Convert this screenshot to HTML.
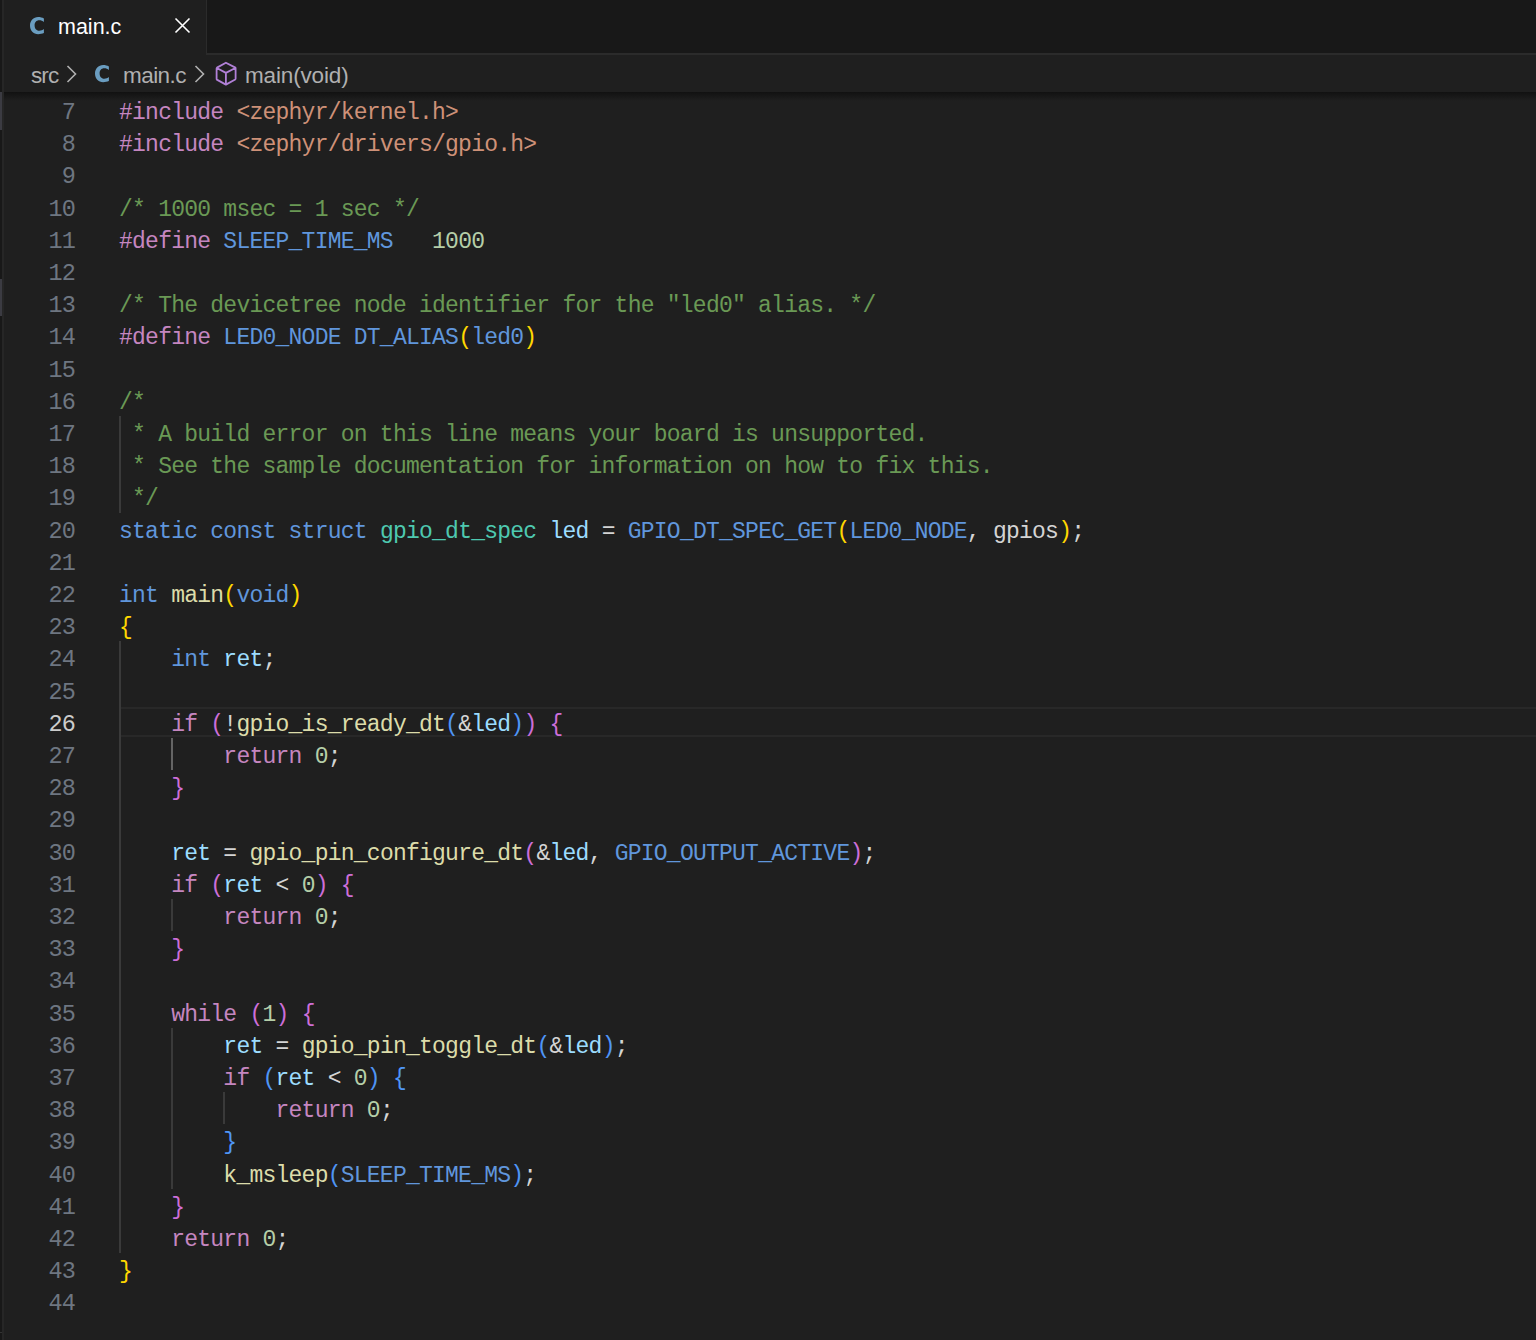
<!DOCTYPE html>
<html><head><meta charset="utf-8"><style>
html,body{margin:0;padding:0;}
body{width:1536px;height:1340px;overflow:hidden;background:#1f1f1f;position:relative;font-family:"Liberation Sans",sans-serif;}
.abs{position:absolute;}
#tabbar{position:absolute;left:0;top:0;width:1536px;height:55px;background:#181818;}
#tabbar .bb{position:absolute;left:207px;right:0;top:53px;height:2px;background:#2b2b2b;}
#tab{position:absolute;left:4px;top:0;width:202px;height:55px;background:#1f1f1f;}
#tabr{position:absolute;left:206px;top:0;width:1px;height:55px;background:#2b2b2b;}
#lstrip{position:absolute;left:0;top:0;width:2px;height:1340px;background:#181818;}
#lborder{position:absolute;left:2px;top:0;width:2px;height:1340px;background:#262626;}
.mk{position:absolute;left:0;width:2px;background:#3b3b42;}
.ui{position:absolute;white-space:pre;font-family:"Liberation Sans",sans-serif;}
#shadow{position:absolute;left:4px;right:0;top:92px;height:9px;background:linear-gradient(#111111 0%,#141414 20%,rgba(31,31,31,0) 100%);}
.ln{position:absolute;left:0;width:75.00px;text-align:right;height:32px;line-height:32px;font-family:"Liberation Mono",monospace;font-size:23.5px;letter-spacing:-0.9px;color:#6e7681;white-space:pre;transform:translateY(0px);}
.ln.cur{color:#cccccc;}
.cl{position:absolute;left:119.00px;height:32px;line-height:32px;font-family:"Liberation Mono",monospace;font-size:23.0px;letter-spacing:-0.76px;color:#d4d4d4;white-space:pre;transform:translateY(0px);}
.ig{position:absolute;width:2px;background:#3a3a3a;}
.ig.act{background:#646464;}
#curline{position:absolute;left:119.00px;right:0;top:707.00px;height:30px;box-sizing:border-box;border-top:2px solid #282828;border-bottom:2px solid #282828;}
.k{color:#c586c0}.s{color:#ce9178}.c{color:#6a9955}.b{color:#6096dc}.n{color:#b5cea8}.t{color:#4ec9b0}.v{color:#9cdcfe}.f{color:#dcdcaa}.y{color:#ffd700}.p{color:#cc6ed8}.q{color:#4f95f5}
</style></head><body>
<div id="tabbar"><div class="bb"></div></div>
<div id="tab"></div>
<div id="tabr"></div>
<div id="lstrip"></div>
<div id="lborder"></div>
<div class="mk" style="top:92px;height:38px"></div>
<div class="mk" style="top:279px;height:37px"></div>
<div class="mk" style="top:1332px;height:1px;background:#333"></div>
<!-- tab content -->
<svg class="abs" style="left:30.3px;top:16.8px" width="15" height="18" viewBox="0 0 15 18"><path d="M13.9 1.5 C12.3 0.5 10.3 0 8.2 0 C3.3 0 0 3.6 0 8.57 C0 13.5 3.3 17.14 8.2 17.14 C10.3 17.14 12.3 16.7 13.9 16.1 L13.9 12.1 C12.6 13.2 11.2 13.8 9.2 13.8 C6.3 13.8 4.6 11.6 4.6 8.57 C4.6 5.5 6.3 3.35 9.2 3.35 C11.2 3.35 12.6 4.0 13.9 5.0 Z" fill="#6a9dc0"/></svg>
<div class="ui" style="left:58px;top:13px;font-size:21.5px;color:#ffffff;line-height:28px">main.c</div>
<svg class="abs" style="left:173.8px;top:17.2px" width="17" height="17" viewBox="0 0 17 17"><path d="M1.5 1.5 L15.5 15.5 M15.5 1.5 L1.5 15.5" stroke="#ffffff" stroke-width="1.6" fill="none"/></svg>
<!-- breadcrumbs -->
<div class="ui" style="left:31px;top:62px;font-size:22.5px;letter-spacing:-0.9px;color:#b0b0b0;line-height:28px">src</div>
<svg class="abs" style="left:66px;top:65px" width="12" height="18" viewBox="0 0 12 18"><path d="M1.5 1 L9.5 9 L1.5 17" stroke="#b0b0b0" stroke-width="1.6" fill="none"/></svg>
<svg class="abs" style="left:94.6px;top:64.8px" width="15" height="18" viewBox="0 0 15 18"><path d="M13.9 1.5 C12.3 0.5 10.3 0 8.2 0 C3.3 0 0 3.6 0 8.57 C0 13.5 3.3 17.14 8.2 17.14 C10.3 17.14 12.3 16.7 13.9 16.1 L13.9 12.1 C12.6 13.2 11.2 13.8 9.2 13.8 C6.3 13.8 4.6 11.6 4.6 8.57 C4.6 5.5 6.3 3.35 9.2 3.35 C11.2 3.35 12.6 4.0 13.9 5.0 Z" fill="#6a9dc0"/></svg>
<div class="ui" style="left:123px;top:62px;font-size:22.5px;letter-spacing:-0.55px;color:#b0b0b0;line-height:28px">main.c</div>
<svg class="abs" style="left:194px;top:65px" width="12" height="18" viewBox="0 0 12 18"><path d="M1.5 1 L9.5 9 L1.5 17" stroke="#b0b0b0" stroke-width="1.6" fill="none"/></svg>
<svg class="abs" style="left:214px;top:61px" width="24" height="26" viewBox="0 0 24 26"><path d="M11.9 1.7 L21.4 6.6 Q21.6 6.8 21.6 7.4 L21.6 17.6 Q21.6 18.2 21.2 18.5 L11.9 23.6 L2.8 18.6 Q2.6 18.3 2.6 17.8 L2.6 7.4 Q2.6 6.9 3 6.6 Z M2.8 7 L11.9 11.9 L21.4 7 M11.9 11.9 L11.9 23.6" stroke="#b180d7" stroke-width="1.8" fill="none" stroke-linejoin="round"/></svg>
<div class="ui" style="left:245px;top:62px;font-size:22.5px;letter-spacing:-0.15px;color:#b0b0b0;line-height:28px">main(void)</div>
<div id="shadow"></div>
<div id="curline"></div>
<div class="ig" style="left:119.00px;top:416.00px;height:96.60px"></div><div class="ig" style="left:119.00px;top:641.40px;height:611.80px"></div><div class="ig act" style="left:171.16px;top:738.00px;height:32.20px"></div><div class="ig" style="left:171.16px;top:899.00px;height:32.20px"></div><div class="ig" style="left:171.16px;top:1027.80px;height:161.00px"></div><div class="ig" style="left:223.32px;top:1092.20px;height:32.20px"></div>
<div class="ln" style="top:97.00px">7</div><div class="cl" style="top:97.00px"><span class="k">#include</span> <span class="s">&lt;zephyr/kernel.h&gt;</span></div><div class="ln" style="top:129.00px">8</div><div class="cl" style="top:129.00px"><span class="k">#include</span> <span class="s">&lt;zephyr/drivers/gpio.h&gt;</span></div><div class="ln" style="top:161.00px">9</div><div class="cl" style="top:161.00px"></div><div class="ln" style="top:194.00px">10</div><div class="cl" style="top:194.00px"><span class="c">/* 1000 msec = 1 sec */</span></div><div class="ln" style="top:226.00px">11</div><div class="cl" style="top:226.00px"><span class="k">#define</span> <span class="b">SLEEP_TIME_MS</span>   <span class="n">1000</span></div><div class="ln" style="top:258.00px">12</div><div class="cl" style="top:258.00px"></div><div class="ln" style="top:290.00px">13</div><div class="cl" style="top:290.00px"><span class="c">/* The devicetree node identifier for the &quot;led0&quot; alias. */</span></div><div class="ln" style="top:322.00px">14</div><div class="cl" style="top:322.00px"><span class="k">#define</span> <span class="b">LED0_NODE</span> <span class="b">DT_ALIAS</span><span class="y">(</span><span class="b">led0</span><span class="y">)</span></div><div class="ln" style="top:355.00px">15</div><div class="cl" style="top:355.00px"></div><div class="ln" style="top:387.00px">16</div><div class="cl" style="top:387.00px"><span class="c">/*</span></div><div class="ln" style="top:419.00px">17</div><div class="cl" style="top:419.00px"><span class="c"> * A build error on this line means your board is unsupported.</span></div><div class="ln" style="top:451.00px">18</div><div class="cl" style="top:451.00px"><span class="c"> * See the sample documentation for information on how to fix this.</span></div><div class="ln" style="top:483.00px">19</div><div class="cl" style="top:483.00px"><span class="c"> */</span></div><div class="ln" style="top:516.00px">20</div><div class="cl" style="top:516.00px"><span class="b">static</span> <span class="b">const</span> <span class="b">struct</span> <span class="t">gpio_dt_spec</span> <span class="v">led</span> = <span class="b">GPIO_DT_SPEC_GET</span><span class="y">(</span><span class="b">LED0_NODE</span>, gpios<span class="y">)</span>;</div><div class="ln" style="top:548.00px">21</div><div class="cl" style="top:548.00px"></div><div class="ln" style="top:580.00px">22</div><div class="cl" style="top:580.00px"><span class="b">int</span> <span class="f">main</span><span class="y">(</span><span class="b">void</span><span class="y">)</span></div><div class="ln" style="top:612.00px">23</div><div class="cl" style="top:612.00px"><span class="y">{</span></div><div class="ln" style="top:644.00px">24</div><div class="cl" style="top:644.00px">    <span class="b">int</span> <span class="v">ret</span>;</div><div class="ln" style="top:677.00px">25</div><div class="cl" style="top:677.00px"></div><div class="ln cur" style="top:709.00px">26</div><div class="cl" style="top:709.00px">    <span class="k">if</span> <span class="p">(</span>!<span class="f">gpio_is_ready_dt</span><span class="q">(</span>&amp;<span class="v">led</span><span class="q">)</span><span class="p">)</span> <span class="p">{</span></div><div class="ln" style="top:741.00px">27</div><div class="cl" style="top:741.00px">        <span class="k">return</span> <span class="n">0</span>;</div><div class="ln" style="top:773.00px">28</div><div class="cl" style="top:773.00px">    <span class="p">}</span></div><div class="ln" style="top:805.00px">29</div><div class="cl" style="top:805.00px"></div><div class="ln" style="top:838.00px">30</div><div class="cl" style="top:838.00px">    <span class="v">ret</span> = <span class="f">gpio_pin_configure_dt</span><span class="p">(</span>&amp;<span class="v">led</span>, <span class="b">GPIO_OUTPUT_ACTIVE</span><span class="p">)</span>;</div><div class="ln" style="top:870.00px">31</div><div class="cl" style="top:870.00px">    <span class="k">if</span> <span class="p">(</span><span class="v">ret</span> &lt; <span class="n">0</span><span class="p">)</span> <span class="p">{</span></div><div class="ln" style="top:902.00px">32</div><div class="cl" style="top:902.00px">        <span class="k">return</span> <span class="n">0</span>;</div><div class="ln" style="top:934.00px">33</div><div class="cl" style="top:934.00px">    <span class="p">}</span></div><div class="ln" style="top:966.00px">34</div><div class="cl" style="top:966.00px"></div><div class="ln" style="top:999.00px">35</div><div class="cl" style="top:999.00px">    <span class="k">while</span> <span class="p">(</span><span class="n">1</span><span class="p">)</span> <span class="p">{</span></div><div class="ln" style="top:1031.00px">36</div><div class="cl" style="top:1031.00px">        <span class="v">ret</span> = <span class="f">gpio_pin_toggle_dt</span><span class="q">(</span>&amp;<span class="v">led</span><span class="q">)</span>;</div><div class="ln" style="top:1063.00px">37</div><div class="cl" style="top:1063.00px">        <span class="k">if</span> <span class="q">(</span><span class="v">ret</span> &lt; <span class="n">0</span><span class="q">)</span> <span class="q">{</span></div><div class="ln" style="top:1095.00px">38</div><div class="cl" style="top:1095.00px">            <span class="k">return</span> <span class="n">0</span>;</div><div class="ln" style="top:1127.00px">39</div><div class="cl" style="top:1127.00px">        <span class="q">}</span></div><div class="ln" style="top:1160.00px">40</div><div class="cl" style="top:1160.00px">        <span class="f">k_msleep</span><span class="q">(</span><span class="b">SLEEP_TIME_MS</span><span class="q">)</span>;</div><div class="ln" style="top:1192.00px">41</div><div class="cl" style="top:1192.00px">    <span class="p">}</span></div><div class="ln" style="top:1224.00px">42</div><div class="cl" style="top:1224.00px">    <span class="k">return</span> <span class="n">0</span>;</div><div class="ln" style="top:1256.00px">43</div><div class="cl" style="top:1256.00px"><span class="y">}</span></div><div class="ln" style="top:1288.00px">44</div><div class="cl" style="top:1288.00px"></div>
</body></html>
